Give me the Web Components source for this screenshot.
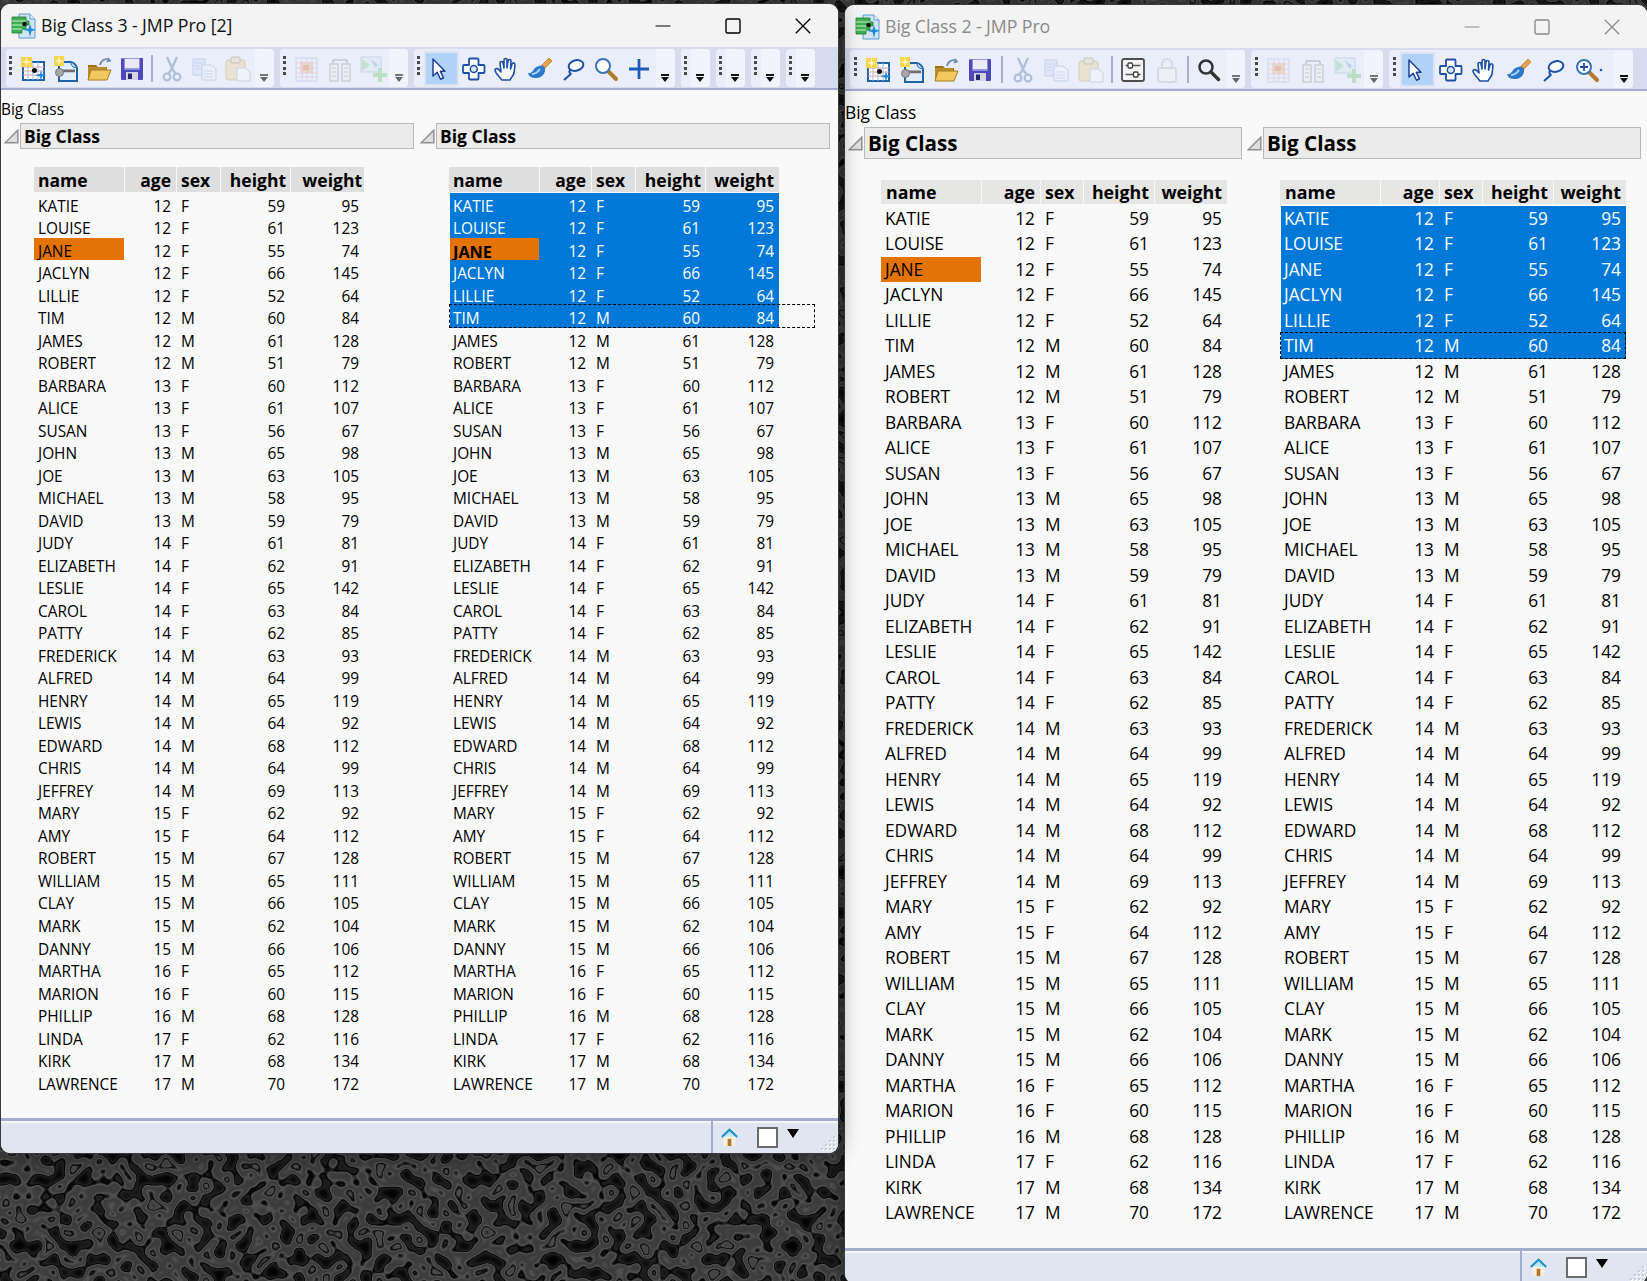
<!DOCTYPE html>
<html><head><meta charset="utf-8"><title>JMP</title>
<style>
html,body{margin:0;padding:0;height:100%;background:#1a1a1a;overflow:hidden}
body{font-family:"Open Sans","Noto Sans",sans-serif;}
</style></head>
<body>
<jmp-desktop>
  <jmp-window style="left:1px;top:4px;width:837px;height:1149px;z-index:2;--title:#111;--ctl:#000;--fs:15.4px;--hfs:17.5px;--lfs:15.4px;--ofs:17.5px;--tfs:17.8px;--hdr:#dedede;--rh:22.52px;--hh:24px;--slot:33px;--grip:10.5px;--rp:3px;--hp:1px;--op:1px;--wp:2px;--hl:4px;--htp:4px"
     title="Big Class 3 - JMP Pro [2]" tool="a" lab="33" lh="26" >
     <jmp-panel style="width:416px" ow="394" ol="19" oh="26" tl="33" tt="18" cols="90 51 43 69 73" mode="plain"></jmp-panel>
     <jmp-panel style="width:416px;--wp:5px" ow="394" ol="19" oh="26" tl="32" tt="18" cols="90 51 43 69 73" mode="sel-bold" ext="36"></jmp-panel>
  </jmp-window>
  <jmp-window style="left:845px;top:5px;width:802px;height:1278px;z-index:1;--title:#8b8b8b;--ctl:#8b8b8b;--fs:17.3px;--hfs:17.8px;--lfs:17.4px;--ofs:20.6px;--tfs:17.8px;--hdr:#e6e6e4;--rh:25.5px;--hh:24px;--slot:34px;--grip:11px;--rp:0px;--hp:0px;--op:0px;--wp:5px;--hl:5px;--htp:5px"
     title="Big Class 2 - JMP Pro" tool="b" lab="36" lh="29">
     <jmp-panel style="width:399px" ow="378" ol="19" oh="32" tl="36" tt="21" cols="100 58 42 70 72" mode="plain"></jmp-panel>
     <jmp-panel style="width:399px" ow="378" ol="19" oh="32" tl="36" tt="21" cols="100 58 42 70 72" mode="sel"></jmp-panel>
  </jmp-window>
</jmp-desktop>
<script>
const I={
app:`<path d="M7 0h11l5 5v19H7z" fill="#cfe4f5" stroke="#5a9bd0"/><path d="M18 0v5h5" fill="#e8f2fb" stroke="#5a9bd0"/><path d="M0 3h14v4h3v4h-3v4h-4v4H0z" fill="#3fb04f" stroke="#1f7a2e" stroke-width=".8"/><path d="M0 7h14M0 11h14M0 15h10" stroke="#c8efcf" stroke-width="1.100"/><circle cx="12.500" cy="10" r="2.300" fill="#111"/><path d="M18 10l1.400 4.400 4.600 1.400-4.600 1.400L18 23l-1.400-5.800-5.600-1.400 5.600-1.400z" fill="#1f8ad6"/>`,
newtable:`<rect x="2" y="5" width="21" height="18" fill="#fff" stroke="#1c63a8" stroke-width="2"/><path d="M2 10h21M2 14h21M2 18h21" stroke="#e0a0a0"/><path d="M7 5v18M12 5v18M17 5v18" stroke="#9fbce0"/><rect x="0" y="0" width="11" height="10" fill="#f6d64e"/><path d="M5.500 0l1 4 4.500 1-4.500 1-1 4-1-4L0 5l4.500-1z" fill="#fff6c0"/><circle cx="13.500" cy="13.500" r="2.500" fill="#111"/><path d="M20 13l1 4 4 1.200-4 1.200L20 24l-1.100-4.600-4.900-1.200 4.900-1.200z" fill="#1f8ad6"/>`,
newscript:`<path d="M5 5h12c3 1 5 3 6 6v13H5z" fill="#e2eefa" stroke="#1c63a8" stroke-width="2"/><path d="M17 5c0 3 .5 5 6 6" fill="#cfe0f2" stroke="#1c63a8"/><rect x="0" y="-1" width="10" height="10" fill="#f6d64e"/><path d="M5 -1l1 4 4 1-4 1-1 4-1-4-4-1 4-1z" fill="#fff6c0"/><path d="M4 12.500h17v2.800H9v3H4z" fill="#6e6e6c"/><circle cx="5.500" cy="15.500" r="4" fill="#a8a8a4" stroke="#777"/>`,
open:`<path d="M1 8h8l2 2h9v5H1z" fill="#9a7220"/><path d="M1 23V10h18v13z" fill="#bb8c2c"/><path d="M4 13h20l-4 10H1z" fill="#f3c95f" stroke="#a67a20"/><path d="M13 8c1-5 6-7 9-5" fill="none" stroke="#6f8eb0" stroke-width="1.800"/><path d="M21 0l3.500 4-5 1.500z" fill="#6f8eb0"/>`,
save:`<rect x="1" y="1" width="22" height="22" rx="1" fill="#4c49bb"/><rect x="5" y="1.500" width="14" height="10" fill="#ebebf7"/><path d="M1.500 1.500h3v11h15v-11" fill="none" stroke="#8f8ce4"/><rect x="6" y="15" width="12" height="8" fill="#d4d4e2"/><rect x="8" y="16.500" width="4" height="5.500" fill="#26246e"/>`,
cut:`<path d="M7 0l6 13M17 0l-6 13M11 13l-3 4M13 13l3 4" fill="none" stroke="#7f9ac2" stroke-width="2.400"/><circle cx="7" cy="20" r="3.400" fill="none" stroke="#7f9ac2" stroke-width="2.200"/><circle cx="17" cy="20" r="3.400" fill="none" stroke="#7f9ac2" stroke-width="2.200"/>`,
copy:`<path d="M0 2h12v16H0z" fill="#d6e0f6" stroke="#a6b9da"/><path d="M9 8h9l5 4v11H9z" fill="#eef3fc" stroke="#a6b9da"/><path d="M11 14h9M11 17h9M11 20h9M2 6h8M2 9h5M2 12h5" stroke="#aec2e0"/>`,
paste:`<rect x="0" y="3" width="19" height="20" rx="2" fill="#eadaaf" stroke="#c4b284"/><rect x="5" y="0" width="9" height="6" rx="1" fill="#e6dfc8" stroke="#a89e80"/><path d="M11 11h8l5 4v9H11z" fill="#f4f6fa" stroke="#b4bed0"/>`,
datagrid:`<rect x="1" y="1" width="21" height="23" fill="#eaeefb" stroke="#b8c2e4"/><rect x="5" y="5" width="13" height="11" fill="#f2c69c"/><path d="M1 6h21M1 11h21M1 16h21M1 20h21M7 1v23M12 1v23M17 1v23" stroke="#d4b0c6" stroke-width=".8"/><rect x="8" y="8" width="6" height="5" fill="#e29a7c"/>`,
cols:`<rect x="2" y="7" width="8" height="17" fill="#eef0f0" stroke="#a8aeae" stroke-width="1.300"/><rect x="14" y="7" width="8" height="17" fill="#eef0f0" stroke="#a8aeae" stroke-width="1.300"/><path d="M4 11h4M4 15h4M4 19h4M16 11h4M16 15h4M16 19h4" stroke="#a8aeae"/><path d="M5 3h14M5 3v3M19 3v3" fill="none" stroke="#a0a6a6" stroke-width="1.600"/>`,
addimg:`<path d="M0 0h20v15H0z" fill="#dce8f2" stroke="#a8c4d6"/><path d="M1 2l8 6-8 6z" fill="#a6d8b0"/><path d="M9 2l6 9 2-3.500z" fill="#8fbee2"/><path d="M17 11h4v5h5v4h-5v5h-4v-5h-5v-4h5z" fill="#98d298"/>`,
select:`<path d="M4 2v17l4.200-3.800 3.300 7 3-1.400-3.200-6.600H16z" fill="#fff" stroke="#1d3f9c" stroke-width="1.500" stroke-linejoin="round"/>`,
cross:`<path d="M8 1.500h7.500q1 0 1 1V8h5q1 0 1 1v6q0 1-1 1h-5v5.500q0 1-1 1H8q-1 0-1-1V16H2q-1 0-1-1V9q0-1 1-1h5V2.500q0-1 1-1z" fill="#fff" stroke="#1d4fa6" stroke-width="1.800" stroke-linejoin="round"/><circle cx="11.800" cy="12" r="3.500" fill="#d6e4f7" stroke="#1d4fa6" stroke-width="1.500"/>`,
hand:`<path d="M7 23c-2-3-7-7-7-10 0-2 3-2 5 1l1 1-1-9c0-2 3-2 3 0l1 5V3c0-2 3-2 3 0v8l1-7c0-2 3-2 3 0l-.5 8 1.500-5c1-2 3-1 3 1l-1 8c-.5 3-3 4-4 7z" fill="#fff" stroke="#1d4fa6" stroke-width="1.600" stroke-linejoin="round"/>`,
brush:`<path d="M16 9c3 4 0 12-8 12-4 0-7-1-8-5 4 1 5-3 7-5 2.500-2 6-3 9-2z" fill="#2a79cf"/><path d="M4 17c4 0 6-2 8-5" stroke="#b4d6f7" stroke-width="2" fill="none"/><path d="M14 8l7-7 3 3-7 7z" fill="#e8a144" stroke="#a8641a" stroke-width=".6"/>`,
lasso:`<ellipse cx="15" cy="8.500" rx="7.500" ry="5.200" transform="rotate(-15 15 8.500)" fill="#fff" stroke="#1d4fa6" stroke-width="2"/><path d="M9.500 13c-2 1-1 3 0 3.500s-1 1.500-2 2.500L3 23" fill="none" stroke="#1d4fa6" stroke-width="2"/>`,
mag:`<path d="M14 14l8 8" stroke="#b07c2c" stroke-width="4" stroke-linecap="round"/><circle cx="9" cy="9" r="7" fill="#fff" stroke="#3a74b8" stroke-width="2"/>`,
zoom:`<path d="M14 14l8 8" stroke="#b07c2c" stroke-width="4" stroke-linecap="round"/><circle cx="9" cy="9" r="7" fill="#fff" stroke="#3a74b8" stroke-width="2"/><path d="M5 9h8M9 5v8" stroke="#1d4fa6" stroke-width="1.800"/>`,
plus:`<path d="M12 2v20M2 12h20" stroke="#1d5bb8" stroke-width="2.800"/>`,
settings:`<rect x="1" y="1" width="22" height="22" rx="2" fill="#f4f4f4" stroke="#4c4c4c" stroke-width="1.800"/><path d="M4.500 7.500h15M4.500 16.500h15" stroke="#555" stroke-width="1.500"/><rect x="7" y="5" width="4.500" height="5" rx="1" fill="#fff" stroke="#3c3c3c" stroke-width="1.300"/><rect x="12.500" y="14" width="4.500" height="5" rx="1" fill="#fff" stroke="#3c3c3c" stroke-width="1.300"/>`,
lock:`<rect x="3" y="10" width="18" height="14" rx="2" fill="#f2f3f6" stroke="#c4c8d0" stroke-width="1.800"/><path d="M7 10V6a5 5 0 0 1 10 0v4" fill="none" stroke="#c4c8d0" stroke-width="2"/>`,
search:`<path d="M14.500 14.500l7 7" stroke="#333" stroke-width="3.400" stroke-linecap="round"/><circle cx="9" cy="9" r="6.500" fill="none" stroke="#333" stroke-width="2.600"/>`,
dot:`<circle cx="4" cy="12" r="1.300" fill="#1d5bb8"/>`,
house:`<path d="M3 10h13v11H3z" fill="#f4efdf"/><path d="M1 11L9.500 3 18 11" fill="#bfe4f5" stroke="#1a8fc8" stroke-width="2.200"/><path d="M3.500 10.500h12v3h-12z" fill="#f4efdf"/><rect x="7.500" y="13" width="4" height="8" fill="#b4762a"/>`
};
const def=(n,c)=>customElements.define(n,c);
const shadow=(el,html)=>{el.attachShadow({mode:'open'}).innerHTML=html};

def('jmp-icon',class extends HTMLElement{connectedCallback(){
  const n=this.getAttribute('name'),off=this.hasAttribute('off');
  shadow(this,`<style>:host{display:flex;align-items:center;justify-content:center;width:var(--slot,33px);height:31px;box-sizing:border-box;flex:none}
  .on{width:31px;height:31px;display:flex;align-items:center;justify-content:center;box-sizing:border-box}
  :host([active]) .on{background:#b1d3f8;box-shadow:0 0 0 2px #dde4ef}
  svg{overflow:visible;display:block;${off?'opacity:.55;':''}}</style>
  <div class="on"><svg width="24" height="24" viewBox="0 0 24 24">${I[n]||''}</svg></div>`);
}});

def('jmp-tool-sep',class extends HTMLElement{connectedCallback(){
  shadow(this,`<style>:host{display:flex;justify-content:center;width:var(--sw,7px);height:31px;flex:none;align-items:center}i{display:block;width:2px;height:27px;background:#a9aeca}</style><i></i>`);
}});

def('jmp-tool-group',class extends HTMLElement{connectedCallback(){
  const dim=this.hasAttribute('dim');
  shadow(this,`<style>:host{display:flex;align-items:center;height:38px;border-radius:4px;background:#e9eefa;flex:none;position:relative}
  :host([bare]){background:transparent}
  .grip{width:var(--grip,10.5px);height:31px;display:flex;flex-direction:column;justify-content:center;gap:2.600px;align-items:center;padding-right:1px;box-sizing:border-box;flex:none;margin-top:-5px}
  .grip i{width:3px;height:3px;background:#4a4a4a;display:block}
  :host([bare]) .grip i{background:transparent}
  .items{display:flex;align-items:center;margin-top:1px}
  .ch{width:var(--chw,19px);height:38px;background:#f1f4fc;border-radius:0 4px 4px 0;display:flex;flex-direction:column;align-items:center;justify-content:flex-end;padding-bottom:5px;box-sizing:border-box;flex:none;gap:1px}
  :host([bare]) .ch{background:transparent}
  .ch b{display:block;width:8px;height:2px;background:${dim?'#777':'#111'}}
  .ch u{display:block;width:0;height:0;border:4px solid transparent;border-top:5px solid ${dim?'#666':'#111'};border-bottom:0}
  </style><div class="grip"><i></i><i></i><i></i><i></i></div><div class="items"><slot></slot></div><div class="ch"><b></b><u></u></div>`);
}});

def('jmp-toolbar',class extends HTMLElement{connectedCallback(){
  const ic=(n,o)=>`<jmp-icon name="${n}"${o||''}></jmp-icon>`,off=' off',g=(x,a='')=>`<jmp-tool-group${a}>${x}</jmp-tool-group>`,sep='<jmp-tool-sep></jmp-tool-sep>';
  const a=this.getAttribute('kind')=='a';
  const file=ic('newtable')+ic('newscript')+ic('open')+ic('save');
  const clip=ic('cut',off)+ic('copy',off)+ic('paste',off);
  const second=g(ic('datagrid',off)+ic('cols',off)+ic('addimg',off),' dim');
  let html;
  if(a){
    html=g(file+sep+clip,' dim')+second+g(ic('select',' active')+ic('cross')+ic('hand')+ic('brush')+ic('lasso')+ic('mag')+ic('plus'))+'<jmp-tool-group style="--chw:18.5px"></jmp-tool-group>'.repeat(4);
  }else{
    const s9='<jmp-tool-sep style="--sw:9px"></jmp-tool-sep>',s8='<jmp-tool-sep style="--sw:8px"></jmp-tool-sep>';
    html=g(file+s9+clip+s8+ic('settings')+ic('lock',off)+s8+ic('search'),' dim')+second+g(ic('select',' active')+ic('cross')+ic('hand')+ic('brush')+ic('lasso')+ic('zoom')+'<jmp-icon name="dot" style="--slot:10px"></jmp-icon>','')+'<jmp-tool-group bare style="--chw:19px;margin-left:-1px"></jmp-tool-group>';
  }
  shadow(this,`<style>:host{display:flex;gap:6px;align-items:flex-start;box-sizing:border-box;height:43px;padding:2px 0 0 5px;background:#d6dcee;border-bottom:2px solid #a3abd0;flex:none;overflow:hidden}</style>${html}`);
}});

def('jmp-titlebar',class extends HTMLElement{connectedCallback(){
  shadow(this,`<style>:host{display:flex;align-items:center;height:43px;background:#f3f3f3;flex:none;color:var(--title);padding-left:11px;box-sizing:border-box}
  svg.a{overflow:visible;flex:none}
  .t{font:var(--tfs)/1 "Open Sans","Noto Sans",sans-serif;margin-left:5px;flex:1;white-space:nowrap;letter-spacing:-.1px}
  .b{width:70px;height:43px;display:flex;align-items:center;justify-content:center;flex:none}
  .b svg{display:block}</style>
  <svg class="a" width="24" height="24" viewBox="0 0 24 24">${I.app}</svg><span class="t">${this.getAttribute('text')}</span>
  <span class="b"><svg width="16" height="16"><path d="M.5 8h15" stroke="var(--ctl)" stroke-width="1.200"/></svg></span>
  <span class="b"><svg width="16" height="16"><rect x="1" y="1" width="14" height="14" rx="1.500" fill="none" stroke="var(--ctl)" stroke-width="1.400"/></svg></span>
  <span class="b"><svg width="16" height="16"><path d="M.8.8l14.400 14.400M15.200.8L.8 15.200" stroke="var(--ctl)" stroke-width="1.300"/></svg></span>`);
}});

def('jmp-statusbar',class extends HTMLElement{connectedCallback(){
  const dots=[[14,2],[10,6],[14,6],[6,10],[10,10],[14,10],[2,14],[6,14],[10,14],[14,14]].map(([x,y])=>`<rect x="${x}" y="${y}" width="2" height="2" fill="#fff"/><rect x="${x-1}" y="${y-1}" width="2" height="2" fill="#c6ccd8"/>`).join('');
  shadow(this,`<style>:host{display:flex;align-items:stretch;justify-content:flex-end;height:35px;box-sizing:border-box;background:#e0e6f1;border-top:3px solid #a3abd0;box-shadow:inset 0 2px 0 #f4f6fb;flex:none}
  .r{display:flex;align-items:center;border-left:2px solid #a3abd0;width:127px;box-sizing:border-box;position:relative;padding-left:7px}
  .sq{width:21px;height:21px;box-sizing:border-box;background:#fff;border:2px solid #6b6b6b;margin-left:18px;flex:none}
  .tr{width:0;height:0;border:6px solid transparent;border-top:9px solid #000;border-bottom:0;margin:-8px 0 0 9px;flex:none}
  svg.g{position:absolute;right:2px;bottom:2px}
  svg.h{overflow:visible;flex:none}</style>
  <div class="r"><svg class="h" width="19" height="20" viewBox="0 0 19 22">${I.house}</svg><span class="sq"></span><span class="tr"></span><svg class="g" width="16" height="16">${dots}</svg></div>`);
}});

const DATA=`KATIE 12 F 59 95|LOUISE 12 F 61 123|JANE 12 F 55 74|JACLYN 12 F 66 145|LILLIE 12 F 52 64|TIM 12 M 60 84|JAMES 12 M 61 128|ROBERT 12 M 51 79|BARBARA 13 F 60 112|ALICE 13 F 61 107|SUSAN 13 F 56 67|JOHN 13 M 65 98|JOE 13 M 63 105|MICHAEL 13 M 58 95|DAVID 13 M 59 79|JUDY 14 F 61 81|ELIZABETH 14 F 62 91|LESLIE 14 F 65 142|CAROL 14 F 63 84|PATTY 14 F 62 85|FREDERICK 14 M 63 93|ALFRED 14 M 64 99|HENRY 14 M 65 119|LEWIS 14 M 64 92|EDWARD 14 M 68 112|CHRIS 14 M 64 99|JEFFREY 14 M 69 113|MARY 15 F 62 92|AMY 15 F 64 112|ROBERT 15 M 67 128|WILLIAM 15 M 65 111|CLAY 15 M 66 105|MARK 15 M 62 104|DANNY 15 M 66 106|MARTHA 16 F 65 112|MARION 16 F 60 115|PHILLIP 16 M 68 128|LINDA 17 F 62 116|KIRK 17 M 68 134|LAWRENCE 17 M 70 172`.split('|').map(r=>r.split(' '));

def('jmp-table',class extends HTMLElement{connectedCallback(){
  const cols=this.getAttribute('cols').split(' ').map(x=>x+'px').join(' ');
  const mode=this.getAttribute('mode'),ext=this.getAttribute('ext');
  const sel=mode!='plain';
  const rows=DATA.map((r,i)=>{
    const s=sel&&i<6,j=i==2&&mode!='sel',tim=sel&&i==5;
    const cls=(s?'row s':'row')+(tim?' focus':'');
    return `<div class="${cls}"><span class="c n${j?' j':''}${j&&mode=='sel-bold'?' bold':''}">${r[0]}</span><span class="c a">${r[1]}</span><span class="c x">${r[2]}</span><span class="c a">${r[3]}</span><span class="c a">${r[4]}</span></div>`;
  }).join('');
  shadow(this,`<style>:host{display:block;width:max-content;color:#000;font:var(--fs)/var(--rh) "Open Sans","Noto Sans",sans-serif}
  .row,.head{display:grid;grid-template-columns:${cols};column-gap:1px}
  .head{height:var(--hh);margin-bottom:1.500px}
  .h{background:var(--hdr);font-weight:700;font-size:var(--hfs);line-height:var(--hh);box-sizing:border-box;padding:var(--hp) 5px 0;white-space:nowrap}
  .h.n{padding-left:var(--hl)}
  .h.a{text-align:right}.h.x{padding:var(--hp) 5px 0 4px}
  .h.t{padding-right:var(--htp)}
  .h.w{padding-right:var(--wp);padding-left:0}
  .row{height:var(--rh);position:relative}
  .c{padding:var(--rp) 4px 0;white-space:nowrap;box-sizing:border-box;height:var(--rh)}
  .c.a{text-align:right;padding-right:5px}.c.x{padding-left:4px}
  .s{background:linear-gradient(#0078d7,#0078d7) 1px 0 no-repeat;color:#fff}
  .j{background:#e37305;color:#000}
  .s .j{background:linear-gradient(#e37305,#e37305) 1px 0/calc(100% - 1px) 100% no-repeat}
  .bold{font-weight:700;font-size:16.3px;padding-left:4px}
  .focus::after{content:"";position:absolute;left:0;right:${ext?-ext:0}px;top:-1px;bottom:0;border:1px dashed #000;pointer-events:none}
  </style>
  <div class="head"><span class="h n">name</span><span class="h a">age</span><span class="h x">sex</span><span class="h a t">height</span><span class="h a w">weight</span></div>${rows}`);
}});

def('jmp-panel',class extends HTMLElement{connectedCallback(){
  const g=n=>this.getAttribute(n);
  shadow(this,`<style>:host{display:block;flex:none}
  .o{display:flex;align-items:center;height:${g('oh')}px}
  .tri{width:${g('ol')}px;flex:none;display:flex;justify-content:flex-end;padding-right:1px;box-sizing:border-box}
  .box{width:${g('ow')}px;height:100%;box-sizing:border-box;background:#ebebeb;border:1px solid #b8b8b8;font:700 var(--ofs)/1 "Open Sans","Noto Sans",sans-serif;display:flex;align-items:center;padding:var(--op) 0 0 3px;color:#000}
  jmp-table{margin:${g('tt')}px 0 0 ${g('tl')}px}</style>
  <div class="o"><div class="tri"><svg width="15" height="15"><path d="M13.800 1.200v12.600H1.200z" fill="#dedede" stroke="#8f8f8f" stroke-width="1.500"/></svg></div><div class="box">Big Class</div></div>
  <jmp-table cols="${g('cols')}" mode="${g('mode')}" ${g('ext')?`ext="${g('ext')}"`:''}></jmp-table>`);
}});

def('jmp-window',class extends HTMLElement{connectedCallback(){
  const g=n=>this.getAttribute(n);
  shadow(this,`<style>:host{display:flex;flex-direction:column;position:absolute;box-sizing:border-box;border-radius:9px;overflow:hidden;background:#f9f9f9;box-shadow:0 0 0 1px #3a3a3a,0 0 22px rgba(0,0,0,.45)}
  .body{flex:1;min-height:0;background:#f9f9f9;overflow:hidden}
  .label{font:var(--lfs)/${g('lh')}px "Open Sans","Noto Sans",sans-serif;height:${g('lab')}px;padding-top:${parseInt(g('lab'))-parseInt(g('lh'))}px;box-sizing:border-box;color:#000}
  .p{display:flex}</style>
  <jmp-titlebar text="${g('title')}"></jmp-titlebar><jmp-toolbar kind="${g('tool')}"></jmp-toolbar>
  <div class="body"><div class="label">Big Class</div><div class="p"><slot></slot></div></div><jmp-statusbar></jmp-statusbar>`);
}});

def('jmp-desktop',class extends HTMLElement{connectedCallback(){
  const tv=".0 .0 .0 .0 .0 .01 .02 .04 .07 .1 .13 .01 .33 .25 .23 .26 .33 .03 .3 .26 .28 .02 .2 .2 .2 .2";
  shadow(this,`<style>:host{display:block;position:relative;width:1647px;height:1281px;overflow:hidden;background:#111}
  svg{position:absolute;left:0;top:0;width:100%;height:100%}</style>
  <svg aria-hidden="true"><filter id="p" x="0" y="0" width="100%" height="100%" color-interpolation-filters="sRGB">
   <feTurbulence type="fractalNoise" baseFrequency=".075" numOctaves="1" seed="7"/>
   <feColorMatrix values="1 0 0 0 0 1 0 0 0 0 1 0 0 0 0 0 0 0 0 1"/>
   <feComponentTransfer><feFuncR type="table" tableValues="${tv}"/><feFuncG type="table" tableValues="${tv}"/><feFuncB type="table" tableValues="${tv}"/></feComponentTransfer>
   <feGaussianBlur stdDeviation=".35"/>
  </filter><rect width="100%" height="100%" filter="url(#p)"/></svg><slot></slot>`);
}});
</script>
</body></html>
